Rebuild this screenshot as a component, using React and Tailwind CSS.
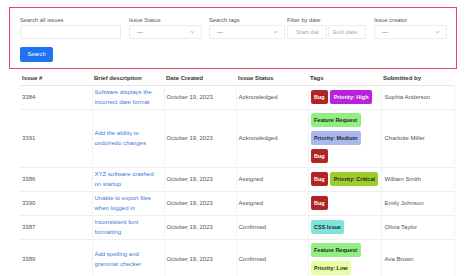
import React from "react";

const rows = [
  { id: "3384", desc: "Software displays the incorrect date format", date: "October 19, 2023", status: "Acknowledged", tags: ["Bug", "Priority: High"], by: "Sophia Anderson" },
  { id: "3391", desc: "Add the ability to undo/redo changes", date: "October 19, 2023", status: "Acknowledged", tags: ["Feature Request", "Priority: Medium", "Bug"], by: "Charlotte Miller" },
  { id: "3386", desc: "XYZ software crashed on startup", date: "October 19, 2023", status: "Assigned", tags: ["Bug", "Priority: Critical"], by: "William Smith" },
  { id: "3390", desc: "Unable to export files when logged in", date: "October 19, 2023", status: "Assigned", tags: ["Bug"], by: "Emily Johnson" },
  { id: "3387", desc: "Inconsistent font formatting", date: "October 19, 2023", status: "Confirmed", tags: ["CSS Issue"], by: "Olivia Taylor" },
  { id: "3389", desc: "Add spelling and grammar checker", date: "October 19, 2023", status: "Confirmed", tags: ["Feature Request", "Priority: Low"], by: "Ava Brown" },
];

const tagStyle = {
  Bug: "bg-[#b22424] text-white",
  "Priority: High": "bg-[#b822dc] text-white",
  "Feature Request": "bg-[#92ee82] text-[#1f2a1f]",
  "Priority: Medium": "bg-[#a9b9ee] text-[#1f2433]",
  "Priority: Critical": "bg-[#9ccc2e] text-[#1f2a10]",
  "CSS Issue": "bg-[#7fe3d8] text-[#12302c]",
  "Priority: Low": "bg-[#e6ffa2] text-[#2a2f1a]",
};

function Chevron() {
  return (
    <svg width="5" height="4" viewBox="0 0 5 4" className="shrink-0">
      <path d="M0.8 1.2 L2.5 2.8 L4.2 1.2" fill="none" stroke="#9a9a9a" strokeWidth="0.8" />
    </svg>
  );
}

function Field({ label, width, className = "", children }) {
  return (
    <div className={`flex flex-col ${className}`} style={{ width }}>
      <span className="h-[9px] text-[5.75px] leading-[9px] text-[#555]">{label}</span>
      {children}
    </div>
  );
}

function SelectBox() {
  return (
    <div className="flex h-[14px] items-center justify-between rounded-[2px] border border-[#ececec] bg-white pl-[7px] pr-[6px] text-[6px] text-[#666]">
      <span>—</span>
      <Chevron />
    </div>
  );
}

export default function App() {
  return (
    <div className="h-[276px] w-[474px] overflow-hidden bg-white pt-[7px] font-['Liberation_Sans',Arial,sans-serif]">
      <div className="ml-[9px] w-[448px] border-[1.5px] border-[#e3475c] pb-[6px] pl-[10px] pt-[8px]">
        <div className="flex items-start">
          <Field label="Search all issues" width={101}>
            <div className="h-[14px] rounded-[2px] border border-[#ececec] bg-white" />
          </Field>
          <Field label="Issue Status" width={73} className="ml-[8px]">
            <SelectBox />
          </Field>
          <Field label="Search tags" width={76} className="ml-[7px]">
            <SelectBox />
          </Field>
          <Field label="Filter by date:" width={79} className="ml-[2px]">
            <div className="flex h-[14px] gap-[1px]">
              <div className="flex w-[40px] items-center rounded-[2px] border border-[#ececec] pl-[8px] text-[6px] text-[#aaa]">
                Start dat
              </div>
              <div className="flex w-[38px] items-center rounded-[2px] border border-[#ececec] pl-[4px] text-[6px] text-[#aaa]">
                End date
              </div>
            </div>
          </Field>
          <Field label="Issue creator" width={73} className="ml-[8px]">
            <SelectBox />
          </Field>
        </div>
        <button className="mt-[8px] flex h-[15px] w-[33px] items-center justify-center rounded-[2px] bg-[#2073f0] text-[5.75px] text-white">
          Search
        </button>
      </div>

      <table className="ml-[20px] mt-[3px] w-[434px] table-fixed border-collapse text-[6px] leading-[10px] text-[#555]">
        <colgroup>
          <col className="w-[72px]" />
          <col className="w-[72px]" />
          <col className="w-[72px]" />
          <col className="w-[72px]" />
          <col className="w-[73px]" />
          <col className="w-[73px]" />
        </colgroup>
        <thead>
          <tr className="h-[13px] border-b border-[#e6e6e6] text-left text-[#333]">
            {["Issue #", "Brief description", "Date Created", "Issue Status", "Tags", "Submitted by"].map((h) => (
              <th key={h} className="px-[2px] pb-[1px] align-middle font-bold">
                {h}
              </th>
            ))}
          </tr>
        </thead>
        <tbody>
          {rows.map((r) => (
            <tr key={r.id} className="border-b border-[#eeeeee]">
              <td className="border-r border-[#f2f2f2] px-[2px] py-[1.5px] align-middle">{r.id}</td>
              <td className="border-r border-[#f2f2f2] px-[2px] py-[1.5px] align-middle text-[#3f78d8]">{r.desc}</td>
              <td className="border-r border-[#f2f2f2] px-[2px] py-[1.5px] align-middle">{r.date}</td>
              <td className="border-r border-[#f2f2f2] px-[2px] py-[1.5px] align-middle">{r.status}</td>
              <td className="border-r border-[#f2f2f2] px-[2px] py-[1.5px] align-middle">
                <div className="flex w-[68px] flex-wrap gap-x-[2px] gap-y-[4px] py-[2px]">
                  {r.tags.map((t) => (
                    <span
                      key={t}
                      className={`flex h-[14px] items-center rounded-[2px] px-[3.5px] text-[5.5px] font-bold ${tagStyle[t]}`}
                    >
                      {t}
                    </span>
                  ))}
                </div>
              </td>
              <td className="border-r border-[#f2f2f2] px-[3px] py-[1.5px] align-middle">{r.by}</td>
            </tr>
          ))}
        </tbody>
      </table>
    </div>
  );
}
